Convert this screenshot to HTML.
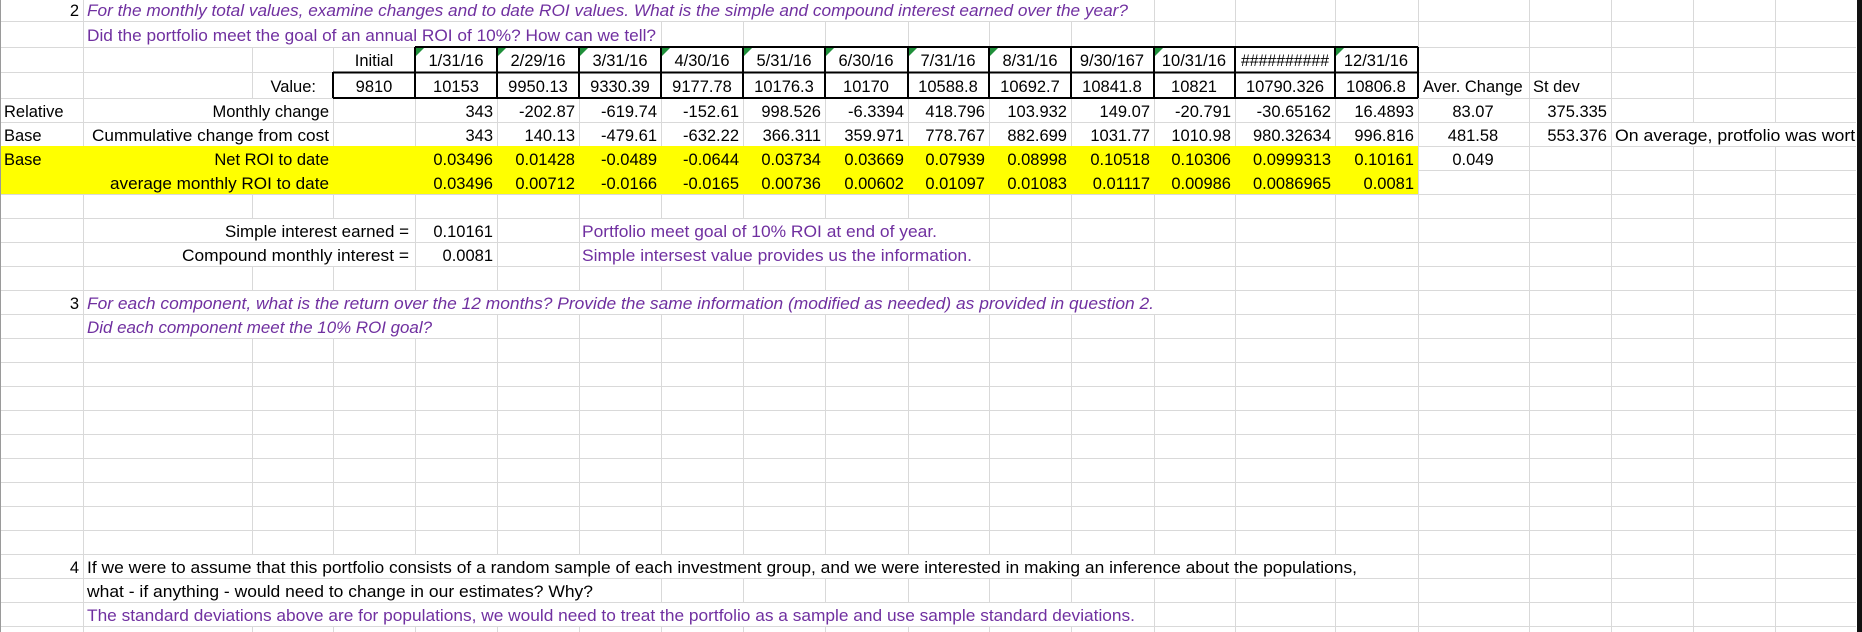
<!DOCTYPE html>
<html><head><meta charset="utf-8"><style>
html,body{margin:0;padding:0;background:#fff;}
svg{display:block;}
text{font-family:"Liberation Sans",sans-serif;font-size:16.5px;fill:#000;}
.p{fill:#7030A0;}
.i{font-style:italic;}
.r{text-anchor:end;}
.c{text-anchor:middle;}
</style></head><body>
<svg width="1862" height="632" viewBox="0 0 1862 632" xmlns="http://www.w3.org/2000/svg">
<defs><clipPath id="cl"><rect x="0" y="0" width="1856" height="632"/></clipPath></defs>
<rect x="0" y="146" width="1418" height="48" fill="#ffff00"/>
<g stroke="#d9d9d9" stroke-width="1" fill="none">
<path d="M0 21.5H1856M0 47.5H1856M0 72.5H1856M0 98.5H1856M0 122.5H1856M1418 146.5H1856M1418 170.5H1856M0 194.5H1856M0 218.5H1856M0 242.5H1856M0 266.5H1856M0 290.5H1856M0 314.5H1856M0 338.5H1856M0 362.5H1856M0 386.5H1856M0 410.5H1856M0 434.5H1856M0 458.5H1856M0 482.5H1856M0 506.5H1856M0 530.5H1856M0 554.5H1856M0 578.5H1856M0 602.5H1856M0 626.5H1856"/>
<path d="M83.5 0V146M83.5 194V632"/>
<path d="M252.5 47V98M252.5 194V218M252.5 266V290M252.5 338V554M252.5 626V632"/>
<path d="M333.5 47V146M333.5 194V218M333.5 266V290M333.5 338V554M333.5 626V632"/>
<path d="M415.5 47V146M415.5 194V290M415.5 338V554M415.5 626V632"/>
<path d="M497.5 47V146M497.5 194V290M497.5 314V554M497.5 626V632"/>
<path d="M579.5 47V146M579.5 194V290M579.5 314V554M579.5 626V632"/>
<path d="M661.5 21V146M661.5 194V218M661.5 266V290M661.5 314V554M661.5 578V602M661.5 626V632"/>
<path d="M743.5 21V146M743.5 194V218M743.5 266V290M743.5 314V554M743.5 578V602M743.5 626V632"/>
<path d="M825.5 21V146M825.5 194V218M825.5 266V290M825.5 314V554M825.5 578V602M825.5 626V632"/>
<path d="M908.5 21V146M908.5 194V218M908.5 266V290M908.5 314V554M908.5 578V602M908.5 626V632"/>
<path d="M989.5 21V146M989.5 194V290M989.5 314V554M989.5 578V602M989.5 626V632"/>
<path d="M1071.5 21V146M1071.5 194V290M1071.5 314V554M1071.5 578V602M1071.5 626V632"/>
<path d="M1154.5 0V146M1154.5 194V290M1154.5 314V554M1154.5 578V632"/>
<path d="M1235.5 0V146M1235.5 194V554M1235.5 578V632"/>
<path d="M1335.5 0V146M1335.5 194V554M1335.5 578V632"/>
<path d="M1418.5 0V632M1529.5 0V632M1611.5 0V632"/>
<path d="M1693.5 0V122M1693.5 146V632M1775.5 0V122M1775.5 146V632"/>
</g>
<rect x="0" y="0" width="1" height="632" fill="#9a9a9a"/>
<rect x="1857" y="0" width="5" height="632" fill="#111"/>
<g stroke="#000" stroke-width="2" fill="none">
<path d="M415 47H1418M333 72.5H1418M333 98H1418"/>
<path d="M333 72V98M415 47V98M497 47V98M579 47V98M661 47V98M743 47V98M825 47V98M908 47V98M989 47V98M1071 47V98M1154 47V98M1235 47V98M1335 47V98M1418 47V98"/>
</g>
<g fill="#1f8f3a">
<polygon points="416,48 424,48 416,56"/><polygon points="498,48 506,48 498,56"/><polygon points="580,48 588,48 580,56"/><polygon points="662,48 670,48 662,56"/><polygon points="744,48 752,48 744,56"/><polygon points="826,48 834,48 826,56"/><polygon points="909,48 917,48 909,56"/><polygon points="990,48 998,48 990,56"/><polygon points="1155,48 1163,48 1155,56"/><polygon points="1336,48 1344,48 1336,56"/>
</g>
<!-- row 0/1 -->
<text x="79" y="16" class="r">2</text>
<text x="87" y="16" class="p i" textLength="1041" lengthAdjust="spacingAndGlyphs">For the monthly total values, examine changes and to date ROI values.  What is the simple and compound interest earned over the year?</text>
<text x="87" y="41" class="p" textLength="569" lengthAdjust="spacingAndGlyphs">Did the portfolio meet the goal of an annual ROI of 10%?  How can we tell?</text>
<!-- row 2 -->
<text x="374" y="66" class="c">Initial</text>
<g class="c">
<text x="456" y="66" class="c">1/31/16</text><text x="538" y="66" class="c">2/29/16</text><text x="620" y="66" class="c">3/31/16</text><text x="702" y="66" class="c">4/30/16</text><text x="784" y="66" class="c">5/31/16</text><text x="866" y="66" class="c">6/30/16</text><text x="948" y="66" class="c">7/31/16</text><text x="1030" y="66" class="c">8/31/16</text><text x="1112" y="66" class="c">9/30/167</text><text x="1194" y="66" class="c">10/31/16</text><text x="1285" y="66" class="c" textLength="88" lengthAdjust="spacingAndGlyphs">##########</text><text x="1376" y="66" class="c">12/31/16</text>
</g>
<!-- row 3 -->
<text x="316" y="92" class="r">Value:</text>
<text x="374" y="92" class="c">9810</text><text x="456" y="92" class="c">10153</text><text x="538" y="92" class="c">9950.13</text><text x="620" y="92" class="c">9330.39</text><text x="702" y="92" class="c">9177.78</text><text x="784" y="92" class="c">10176.3</text><text x="866" y="92" class="c">10170</text><text x="948" y="92" class="c">10588.8</text><text x="1030" y="92" class="c">10692.7</text><text x="1112" y="92" class="c">10841.8</text><text x="1194" y="92" class="c">10821</text><text x="1285" y="92" class="c">10790.326</text><text x="1376" y="92" class="c">10806.8</text>
<text x="1423" y="92">Aver. Change</text><text x="1533" y="92">St dev</text>
<!-- row 4 -->
<text x="4" y="117">Relative</text>
<text x="329" y="117" class="r">Monthly change</text>
<text x="493" y="117" class="r">343</text><text x="575" y="117" class="r">-202.87</text><text x="657" y="117" class="r">-619.74</text><text x="739" y="117" class="r">-152.61</text><text x="821" y="117" class="r">998.526</text><text x="904" y="117" class="r">-6.3394</text><text x="985" y="117" class="r">418.796</text><text x="1067" y="117" class="r">103.932</text><text x="1150" y="117" class="r">149.07</text><text x="1231" y="117" class="r">-20.791</text><text x="1331" y="117" class="r">-30.65162</text><text x="1414" y="117" class="r">16.4893</text>
<text x="1473" y="117" class="c">83.07</text><text x="1607" y="117" class="r">375.335</text>
<!-- row 5 -->
<text x="4" y="141">Base</text>
<text x="329" y="141" class="r" textLength="237" lengthAdjust="spacingAndGlyphs">Cummulative change from cost</text>
<text x="493" y="141" class="r">343</text><text x="575" y="141" class="r">140.13</text><text x="657" y="141" class="r">-479.61</text><text x="739" y="141" class="r">-632.22</text><text x="821" y="141" class="r">366.311</text><text x="904" y="141" class="r">359.971</text><text x="985" y="141" class="r">778.767</text><text x="1067" y="141" class="r">882.699</text><text x="1150" y="141" class="r">1031.77</text><text x="1231" y="141" class="r">1010.98</text><text x="1331" y="141" class="r">980.32634</text><text x="1414" y="141" class="r">996.816</text>
<text x="1473" y="141" class="c">481.58</text><text x="1607" y="141" class="r">553.376</text>
<g clip-path="url(#cl)"><text x="1615" y="141" textLength="250" lengthAdjust="spacingAndGlyphs">On average, protfolio was worth</text></g>
<!-- row 6 -->
<text x="4" y="165">Base</text>
<text x="329" y="165" class="r">Net ROI to date</text>
<text x="493" y="165" class="r">0.03496</text><text x="575" y="165" class="r">0.01428</text><text x="657" y="165" class="r">-0.0489</text><text x="739" y="165" class="r">-0.0644</text><text x="821" y="165" class="r">0.03734</text><text x="904" y="165" class="r">0.03669</text><text x="985" y="165" class="r">0.07939</text><text x="1067" y="165" class="r">0.08998</text><text x="1150" y="165" class="r">0.10518</text><text x="1231" y="165" class="r">0.10306</text><text x="1331" y="165" class="r">0.0999313</text><text x="1414" y="165" class="r">0.10161</text>
<text x="1473" y="165" class="c">0.049</text>
<!-- row 7 -->
<text x="329" y="189" class="r" textLength="219" lengthAdjust="spacingAndGlyphs">average monthly ROI to date</text>
<text x="493" y="189" class="r">0.03496</text><text x="575" y="189" class="r">0.00712</text><text x="657" y="189" class="r">-0.0166</text><text x="739" y="189" class="r">-0.0165</text><text x="821" y="189" class="r">0.00736</text><text x="904" y="189" class="r">0.00602</text><text x="985" y="189" class="r">0.01097</text><text x="1067" y="189" class="r">0.01083</text><text x="1150" y="189" class="r">0.01117</text><text x="1231" y="189" class="r">0.00986</text><text x="1331" y="189" class="r">0.0086965</text><text x="1414" y="189" class="r">0.0081</text>
<!-- rows 9/10 -->
<text x="409" y="237" class="r" textLength="184" lengthAdjust="spacingAndGlyphs">Simple interest earned =</text>
<text x="493" y="237" class="r">0.10161</text>
<text x="582" y="237" class="p" textLength="355" lengthAdjust="spacingAndGlyphs">Portfolio meet goal of 10% ROI at end of year.</text>
<text x="409" y="261" class="r" textLength="227" lengthAdjust="spacingAndGlyphs">Compound monthly interest =</text>
<text x="493" y="261" class="r">0.0081</text>
<text x="582" y="261" class="p" textLength="390" lengthAdjust="spacingAndGlyphs">Simple intersest value provides us the information.</text>
<!-- rows 12/13 -->
<text x="79" y="309" class="r">3</text>
<text x="87" y="309" class="p i" textLength="1067" lengthAdjust="spacingAndGlyphs">For each component, what is the return over the 12 months?  Provide the same information (modified as needed) as provided in question 2.</text>
<text x="87" y="333" class="p i" textLength="345" lengthAdjust="spacingAndGlyphs">Did each component meet the 10% ROI goal?</text>
<!-- rows 23-25 -->
<text x="79" y="573" class="r">4</text>
<text x="87" y="573" textLength="1270" lengthAdjust="spacingAndGlyphs">If we were to assume that this portfolio consists of a random sample of each investment group, and we were interested in making an inference about the populations,</text>
<text x="87" y="597" textLength="506" lengthAdjust="spacingAndGlyphs">what - if anything - would need to change in our estimates?  Why?</text>
<text x="87" y="621" class="p" textLength="1048" lengthAdjust="spacingAndGlyphs">The standard deviations above are for populations, we would need to treat the portfolio as a sample and use sample standard deviations.</text>
</svg>
</body></html>
